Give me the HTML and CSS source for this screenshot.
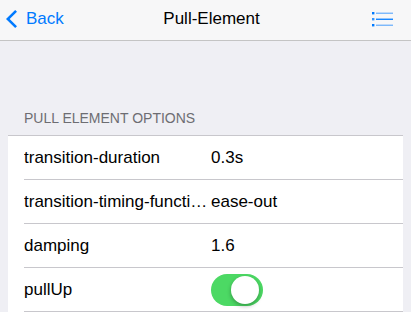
FILE: index.html
```html
<!DOCTYPE html>
<html>
<head>
<meta charset="utf-8">
<link rel="stylesheet" href="styles.css">
</head>
<body>
<header class="navbar">
  <a class="nav-left">
    <svg class="chevron" width="11" height="18" viewBox="0 0 12 20" preserveAspectRatio="none"><path d="M10,0l2,2l-8,8l8,8l-2,2L0,10L10,0z" fill="#007aff"/></svg>
    <span>Back</span>
  </a>
  <div class="nav-title">Pull-Element</div>
  <div class="nav-right">
    <svg class="menu" width="22" height="16" viewBox="0 0 22 16">
      <rect x="0" y="0" width="2.4" height="2.4" fill="#007aff"/>
      <rect x="0" y="6" width="2.4" height="2.4" fill="#007aff" opacity="0.8"/>
      <rect x="0" y="12" width="2.4" height="2.4" fill="#007aff"/>
      <rect x="4" y="0.6" width="17" height="1.3" fill="#007aff" opacity="0.55"/>
      <rect x="4" y="6.6" width="17" height="1.3" fill="#007aff"/>
      <rect x="4" y="12.6" width="17" height="1.3" fill="#007aff" opacity="0.55"/>
    </svg>
  </div>
</header>
<main class="page">
  <div class="block-title">PULL ELEMENT OPTIONS</div>
  <ul class="list">
    <li class="row"><div class="inner"><div class="label">transition-duration</div><div class="value">0.3s</div></div></li>
    <li class="row"><div class="inner"><div class="label">transition-timing-function</div><div class="value">ease-out</div></div></li>
    <li class="row"><div class="inner"><div class="label">damping</div><div class="value">1.6</div></div></li>
    <li class="row"><div class="inner"><div class="label">pullUp</div><div class="value"><span class="toggle"><span class="knob"></span></span></div></div></li>
  </ul>
</main>
</body>
</html>
```
FILE: styles.css
```css
html, body {
  margin: 0;
  padding: 0;
}
body {
  background: #efeff4;
  font-family: "Liberation Sans", Arial, sans-serif;
  color: #000;
  width: 411px;
  height: 312px;
  overflow: hidden;
}
.navbar {
  height: 40px;
  background: #f7f7f8;
  border-bottom: 1px solid #c4c4c4;
  display: grid;
  grid-template-columns: 1fr auto 1fr;
  align-items: center;
  font-size: 17px;
}
.nav-left {
  display: flex;
  align-items: center;
  gap: 9px;
  padding-left: 6px;
  color: #007aff;
  margin-top: -3px;
}
.chevron {
  display: block;
}
.nav-title {
  padding-left: 12px;
  margin-top: -3px;
}
.nav-right {
  display: flex;
  justify-content: flex-end;
  padding-right: 17px;
  margin-top: -1px;
}
.menu {
  display: block;
}
.page {
  padding-top: 69px;
}
.block-title {
  font-size: 14px;
  line-height: 17px;
  color: #6d6d72;
  padding: 0 24px;
  margin-bottom: 8px;
}
.list {
  list-style: none;
  margin: 0 8px;
  padding: 0;
  background: #fff;
  border-top: 1px solid #c8c7cc;
}
.row {
  padding-left: 16px;
}
.inner {
  height: 43px;
  border-bottom: 1px solid #c8c7cc;
  display: flex;
  align-items: center;
  font-size: 17px;
}
.label {
  flex: 0 0 184px;
  padding-right: 3px;
  white-space: nowrap;
  overflow: hidden;
  text-overflow: ellipsis;
}
.value {
  flex: 1;
  display: flex;
  align-items: center;
}
.toggle {
  position: relative;
  display: block;
  width: 52px;
  height: 32px;
  border-radius: 16px;
  background: #4cd964;
}
.knob {
  position: absolute;
  top: 2px;
  left: 20px;
  width: 28px;
  height: 28px;
  border-radius: 50%;
  background: #fff;
  box-shadow: 0 2px 4px rgba(0,0,0,0.3);
}
```
